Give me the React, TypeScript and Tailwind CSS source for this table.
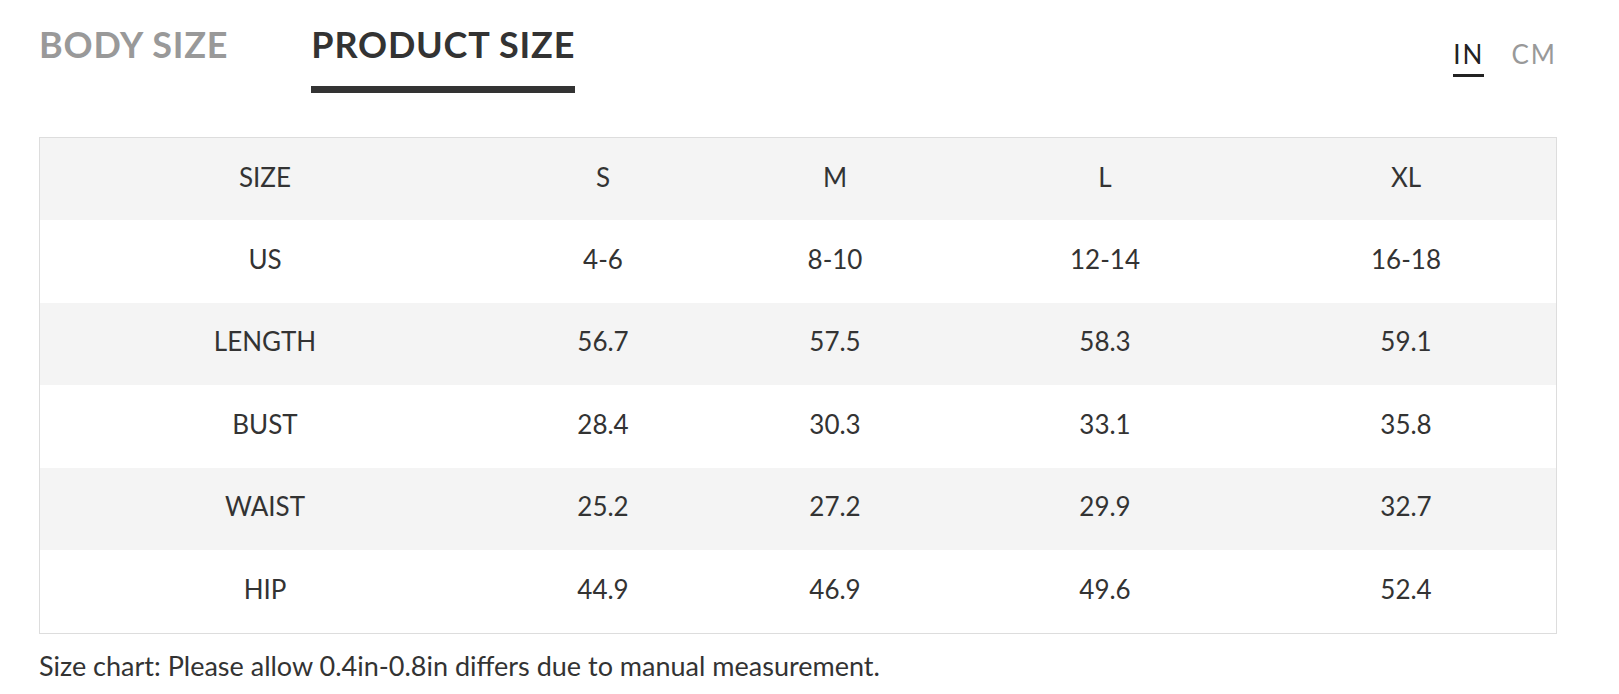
import { useState } from 'react'

const columns = ['SIZE', 'S', 'M', 'L', 'XL']

const rows = [
  ['US', '4-6', '8-10', '12-14', '16-18'],
  ['LENGTH', '56.7', '57.5', '58.3', '59.1'],
  ['BUST', '28.4', '30.3', '33.1', '35.8'],
  ['WAIST', '25.2', '27.2', '29.9', '32.7'],
  ['HIP', '44.9', '46.9', '49.6', '52.4'],
]

const grid = 'grid grid-cols-[450px_226px_238px_302px_1fr]'

export default function App() {
  const [tab, setTab] = useState('product')
  const [unit, setUnit] = useState('in')

  return (
    <div className="w-[1619px] h-[694px] bg-white pl-[39px] pr-[62px] font-['Lato',sans-serif] text-[#333]">
      <div className="flex items-start justify-between h-[137px]">
        <div className="flex gap-[83px] pt-[22px]">
          <button
            onClick={() => setTab('body')}
            className={`flex flex-col text-[36px] font-bold leading-[44px] tracking-[0.8px] ${
              tab === 'body' ? 'text-[#333]' : 'text-[#999]'
            }`}
          >
            BODY SIZE
            <span className={`mt-[20px] h-[7px] ${tab === 'body' ? 'bg-[#333]' : ''}`} />
          </button>
          <button
            onClick={() => setTab('product')}
            className={`flex flex-col text-[36px] font-bold leading-[44px] tracking-[0.8px] ${
              tab === 'product' ? 'text-[#333]' : 'text-[#999]'
            }`}
          >
            PRODUCT SIZE
            <span className={`mt-[20px] h-[7px] ${tab === 'product' ? 'bg-[#333]' : ''}`} />
          </button>
        </div>
        <div className="flex gap-[27px] pt-[40px] text-[26px] leading-[28px] tracking-[2px]">
          <button
            onClick={() => setUnit('in')}
            className={`flex flex-col ${unit === 'in' ? 'text-[#222]' : 'text-[#999]'}`}
          >
            IN
            <span className={`mt-[6px] h-[3px] ${unit === 'in' ? 'bg-[#222]' : ''}`} />
          </button>
          <button
            onClick={() => setUnit('cm')}
            className={`flex flex-col ${unit === 'cm' ? 'text-[#222]' : 'text-[#999]'}`}
          >
            CM
            <span className={`mt-[6px] h-[3px] ${unit === 'cm' ? 'bg-[#222]' : ''}`} />
          </button>
        </div>
      </div>

      <div className="border border-[#ddd] text-[26px]">
        <div className={`${grid} h-[82px] bg-[#f4f4f4]`}>
          {columns.map((c) => (
            <div key={c} className="flex items-center justify-center pb-[4px]">
              {c}
            </div>
          ))}
        </div>
        {rows.map((r, i) => (
          <div key={r[0]} className={`${grid} h-[82.5px] ${i % 2 === 1 ? 'bg-[#f4f4f4]' : 'bg-white'}`}>
            {r.map((v, j) => (
              <div key={j} className="flex items-center justify-center pb-[4px]">
                {v}
              </div>
            ))}
          </div>
        ))}
      </div>

      <p className="mt-[16px] text-[27px] leading-[32px]">
        Size chart: Please allow 0.4in-0.8in differs due to manual measurement.
      </p>
    </div>
  )
}
